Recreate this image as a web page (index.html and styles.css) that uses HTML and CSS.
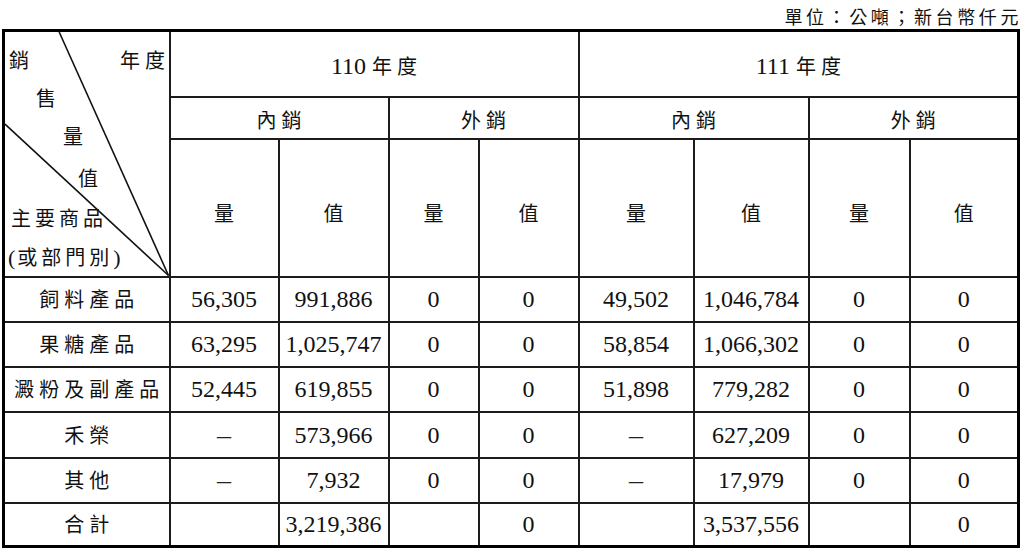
FILE: index.html
```html
<!DOCTYPE html>
<html lang="zh-Hant">
<head>
<meta charset="utf-8">
<title>主要商品銷售量值</title>
<link rel="stylesheet" href="styles.css">
</head>
<body>
<div class="page">
  <div class="unit">單位：公噸；新台幣仟元</div>
  <table class="sales">
    <colgroup>
      <col class="c-name">
      <col class="c-a"><col class="c-b"><col class="c-c"><col class="c-d">
      <col class="c-e"><col class="c-f"><col class="c-g"><col class="c-h">
    </colgroup>
    <thead>
      <tr class="r1">
        <th rowspan="3" class="diag">
          <svg class="diag-lines" viewBox="0 0 166 246" preserveAspectRatio="none" aria-hidden="true">
            <line x1="55" y1="0" x2="166" y2="246" />
            <line x1="0" y1="93" x2="166" y2="246" />
          </svg>
          <span class="dl l-xiao">銷</span>
          <span class="dl l-year">年度</span>
          <span class="dl l-shou">售</span>
          <span class="dl l-liang">量</span>
          <span class="dl l-zhi">值</span>
          <span class="dl l-main">主要商品</span>
          <span class="dl l-dept"><span class="lp">(</span>或部門別<span class="lp">)</span></span>
        </th>
        <th colspan="4">110 <span class="cj">年度</span></th>
        <th colspan="4">111 <span class="cj">年度</span></th>
      </tr>
      <tr class="r2">
        <th colspan="2"><span class="cj">內銷</span></th>
        <th colspan="2"><span class="cj">外銷</span></th>
        <th colspan="2"><span class="cj">內銷</span></th>
        <th colspan="2"><span class="cj">外銷</span></th>
      </tr>
      <tr class="r3">
        <th><span class="cj">量</span></th><th><span class="cj">值</span></th>
        <th><span class="cj">量</span></th><th><span class="cj">值</span></th>
        <th><span class="cj">量</span></th><th><span class="cj">值</span></th>
        <th><span class="cj">量</span></th><th><span class="cj">值</span></th>
      </tr>
    </thead>
    <tbody>
      <tr>
        <td><span class="cj">飼料產品</span></td>
        <td>56,305</td><td>991,886</td><td>0</td><td>0</td>
        <td>49,502</td><td>1,046,784</td><td>0</td><td>0</td>
      </tr>
      <tr>
        <td><span class="cj">果糖產品</span></td>
        <td>63,295</td><td>1,025,747</td><td>0</td><td>0</td>
        <td>58,854</td><td>1,066,302</td><td>0</td><td>0</td>
      </tr>
      <tr>
        <td><span class="cj">澱粉及副產品</span></td>
        <td>52,445</td><td>619,855</td><td>0</td><td>0</td>
        <td>51,898</td><td>779,282</td><td>0</td><td>0</td>
      </tr>
      <tr class="r-tall">
        <td><span class="cj">禾榮</span></td>
        <td><span class="dash">—</span></td><td>573,966</td><td>0</td><td>0</td>
        <td><span class="dash">—</span></td><td>627,209</td><td>0</td><td>0</td>
      </tr>
      <tr>
        <td><span class="cj">其他</span></td>
        <td><span class="dash">—</span></td><td>7,932</td><td>0</td><td>0</td>
        <td><span class="dash">—</span></td><td>17,979</td><td>0</td><td>0</td>
      </tr>
      <tr class="r-last">
        <td><span class="cj">合計</span></td>
        <td></td><td>3,219,386</td><td></td><td>0</td>
        <td></td><td>3,537,556</td><td></td><td>0</td>
      </tr>
    </tbody>
  </table>
</div>
</body>
</html>
```

FILE: styles.css
```css
* { box-sizing: border-box; }

html, body {
  margin: 0;
  padding: 0;
  background: #ffffff;
  color: #111111;
}

.page {
  width: 1024px;
  height: 552px;
  overflow: hidden;
}

.unit {
  height: 29px;
  padding: 6px 2px 0 0;
  text-align: right;
  font-family: "Noto Sans CJK TC", "Noto Sans CJK SC", sans-serif;
  font-size: 18px;
  line-height: 20px;
  letter-spacing: 3.6px;
  color: #111111;
}

.sales {
  margin-left: 2px;
  width: 1018px;
  table-layout: fixed;
  border-collapse: collapse;
  border: 3px solid #000000;
  font-family: "Liberation Serif", "Noto Sans CJK TC", serif;
  font-size: 24px;
  color: #111111;
}

.c-name { width: 166px; }
.c-a { width: 109px; }
.c-b { width: 110px; }
.c-c { width: 90px; }
.c-d { width: 100px; }
.c-e { width: 115px; }
.c-f { width: 115px; }
.c-g { width: 101px; }
.c-h { width: 109px; }

.sales th,
.sales td {
  border: 2px solid #1c1c1c;
  padding: 0;
  text-align: center;
  vertical-align: middle;
  font-weight: normal;
  line-height: 24px;
  white-space: nowrap;
}

.r1 { height: 66px; }
.r2 { height: 42px; }
.r3 { height: 138px; }
.sales tbody tr { height: 45px; }
.sales tbody tr.r-tall { height: 46px; }
.sales tbody tr.r-last { height: 44px; }

.r1 th { padding-top: 4px; }
.r2 th { padding-top: 4px; }
.r3 th { padding-top: 10px; }

.cj {
  font-family: "Noto Sans CJK TC", "Noto Sans CJK JP", sans-serif;
  font-size: 20px;
  letter-spacing: 5px;
  margin-right: -5px;
}

.dash {
  font-family: "Noto Sans CJK TC", sans-serif;
  font-size: 18px;
  color: #222222;
}

/* diagonal header cell */
.sales th.diag {
  position: relative;
  padding: 0;
}

.diag-lines {
  position: absolute;
  left: 0;
  top: 0;
  width: 100%;
  height: 100%;
  overflow: visible;
}

.diag-lines line {
  stroke: #111111;
  stroke-width: 1.6;
  vector-effect: non-scaling-stroke;
}

.dl {
  position: absolute;
  font-family: "Noto Sans CJK TC", sans-serif;
  font-size: 20px;
  line-height: 20px;
  letter-spacing: 5px;
  text-align: left;
}

.l-xiao { left: 4px; top: 18px; }
.l-year { left: 115px; top: 18px; }
.l-shou { left: 31px; top: 56px; }
.l-liang { left: 58px; top: 94px; }
.l-zhi { left: 73px; top: 136px; }
.l-main { left: 6px; top: 176px; letter-spacing: 4px; }
.l-dept { left: 3px; top: 215px; letter-spacing: 4px; }

.lp {
  font-family: "Liberation Serif", serif;
  font-size: 22px;
  letter-spacing: 2px;
}
```
